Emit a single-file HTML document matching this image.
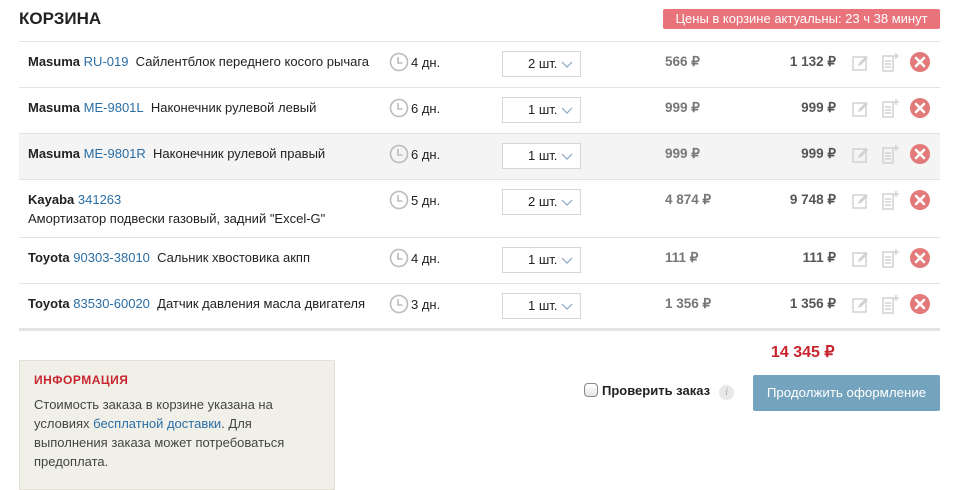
<!DOCTYPE html>
<html><head><meta charset="utf-8"><style>
*{margin:0;padding:0;box-sizing:border-box}
body{width:960px;height:478px;background:#fff;font-family:"Liberation Sans",sans-serif;color:#222;position:relative;overflow:hidden;font-size:13px}
.a{position:absolute;white-space:nowrap}
h1{position:absolute;left:19px;top:9px;font-size:17px;font-weight:bold;color:#222}
.badge{position:absolute;left:663px;top:9px;width:277px;height:20px;background:#e8737a;color:#fff;border-radius:2px;font-size:13px;line-height:20px;text-align:center}
.row{position:absolute;left:19px;width:921px;border-top:1px solid #e3e3e3}
.row.g{background:#f4f4f4}
.brand{font-weight:bold}
.lnk{color:#2a6ea6}
.sel{position:absolute;left:483px;width:79px;height:26px;border:1px solid #d6d6d6;background:#fff;font-size:13px;line-height:24px;padding-left:25px}
.sel svg{position:absolute;right:7px;top:9px}
.pr{position:absolute;left:646px;color:#777;font-weight:bold;font-size:13.5px}
.tot{position:absolute;right:104px;color:#555;font-weight:bold;font-size:13.5px}
.clk{position:absolute;left:370px}
.days{position:absolute;left:392px}
.ic{position:absolute}
</style></head><body>
<h1>КОРЗИНА</h1>
<div class="badge">Цены в корзине актуальны: 23 ч 38 минут</div>

<div id="rows"></div>
<div class="a" style="left:19px;top:328px;width:921px;height:3px;background:#e3e3e3"></div>

<div class="a" style="left:771px;top:342px;font-size:16px;font-weight:bold;color:#c8262e">14 345 ₽</div>

<div class="a" style="left:584px;top:383px;width:14px;height:14px;border:1px solid #888;border-radius:4px;background:linear-gradient(#fff,#e6e6e6)"></div>
<div class="a" style="left:602px;top:383px;font-weight:bold;font-size:13px">Проверить заказ</div>
<div class="a" style="left:719px;top:385px;width:15px;height:15px;border-radius:50%;background:#e8e8e8;color:#aaa;font-size:11px;font-style:italic;font-family:'Liberation Serif',serif;text-align:center;line-height:15px">i</div>
<div class="a" style="left:753px;top:375px;width:187px;height:36px;background:#73a3bd;border-radius:2px;color:#fff;font-size:13.3px;line-height:36px;text-align:center">Продолжить оформление</div>

<div class="a" style="left:19px;top:360px;width:316px;height:130px;background:#f1f0e8;border:1px solid #e4e2d6"></div>
<div class="a" style="left:34px;top:373px;font-size:12px;font-weight:bold;color:#c8262e;letter-spacing:.5px">ИНФОРМАЦИЯ</div>
<div class="a" style="left:34px;top:395px;font-size:13px;line-height:19px;color:#444;white-space:normal;width:290px">Стоимость заказа в корзине указана на условиях <span class="lnk">бесплатной доставки</span>. Для выполнения заказа может потребоваться предоплата.</div>

<script>
const R=[
[41,46,'Masuma','RU-019','Сайлентблок переднего косого рычага','4','2','566','1 132',0],
[87,46,'Masuma','ME-9801L','Наконечник рулевой левый','6','1','999','999',0],
[133,46,'Masuma','ME-9801R','Наконечник рулевой правый','6','1','999','999',1],
[179,58,'Kayaba','341263','','5','2','4 874','9 748',0],
[237,46,'Toyota','90303-38010','Сальник хвостовика акпп','4','1','111','111',0],
[283,46,'Toyota','83530-60020','Датчик давления масла двигателя','3','1','1 356','1 356',0]];
let h='';
for(const r of R){
const [t,hh,b,c,n,d,q,p,tt,g]=r;
h+=`<div class="row${g?' g':''}" style="top:${t}px;height:${hh}px">
<div class="a" style="left:9px;top:12px"><span class="brand">${b}</span> <span class="lnk">${c}</span>&nbsp;&nbsp;${n}</div>
${n===''?'<div class="a" style="left:9px;top:31px">Амортизатор подвески газовый, задний "Excel-G"</div>':''}
<svg class="clk" style="top:10px" width="20" height="20" viewBox="0 0 20 20"><circle cx="10" cy="10" r="8.5" fill="none" stroke="#bbb" stroke-width="1.6"/><path d="M9 5v6h4.5" fill="none" stroke="#bbb" stroke-width="1.6"/></svg>
<div class="days" style="top:13px">${d} дн.</div>
<div class="sel" style="top:9px">${q} шт.<svg width="12" height="7" viewBox="0 0 12 7"><path d="M1 1l5 5 5-5" fill="none" stroke="#8aa6c0" stroke-width="1.2"/></svg></div>
<div class="pr" style="top:12px">${p} ₽</div>
<div class="tot" style="top:12px">${tt} ₽</div>
<svg class="ic" style="left:833px;top:12px" width="18" height="18" viewBox="0 0 18 18"><rect x="1" y="3" width="13" height="13" fill="none" stroke="#d2d2d2" stroke-width="1.5"/><path d="M6 12l1-3 7-7 2 2-7 7z" fill="#d2d2d2"/></svg>
<svg class="ic" style="left:862px;top:10px" width="20" height="20" viewBox="0 0 20 20"><path d="M2 4h10v15H2z" fill="none" stroke="#d2d2d2" stroke-width="1.5"/><path d="M4 9h6M4 12h6M4 15h6M15 1v6M12 4h6" stroke="#d2d2d2" stroke-width="1.5"/></svg>
<svg class="ic" style="left:891px;top:10px" width="20" height="20" viewBox="0 0 20 20"><circle cx="10" cy="10" r="10" fill="#e27a7a"/><path d="M6 6l8 8M14 6l-8 8" stroke="#fff" stroke-width="2.6" stroke-linecap="round"/></svg>
</div>`;}
document.getElementById('rows').outerHTML=h;
</script>
</body></html>
